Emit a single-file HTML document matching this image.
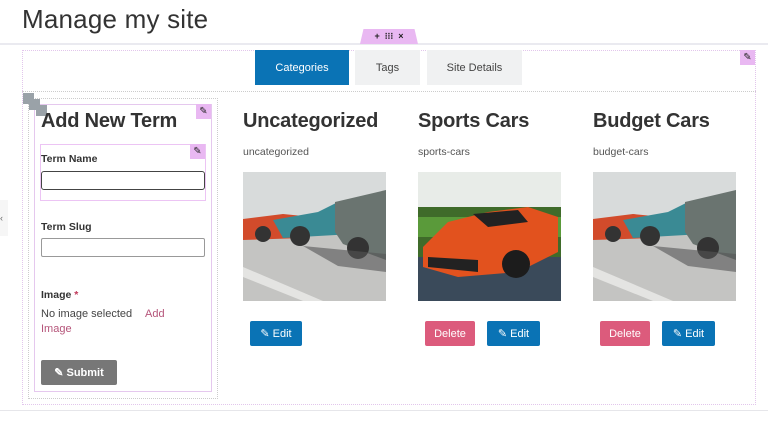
<!DOCTYPE html>
<html><head><style>
*{box-sizing:border-box;margin:0;padding:0}
body{width:768px;height:423px;background:#fff;font-family:"Liberation Sans",sans-serif;color:#333;position:relative;overflow:hidden}
.a{position:absolute}
h1{position:absolute;left:22px;top:4px;font-size:26px;font-weight:normal;color:#333;letter-spacing:.2px}
.btn{position:absolute;color:#fff;font-size:11px;display:flex;align-items:center;justify-content:center;border-radius:2px}
.blue{background:#0a73b5}.red{background:#dc5b7c}
.lbl{position:absolute;font-size:10.5px;color:#333;font-weight:bold}
.h2{position:absolute;font-size:20px;font-weight:bold;color:#333;letter-spacing:-.2px}
.slug{position:absolute;font-size:10.5px;color:#555}
.pen{position:absolute;width:15px;height:15px;background:#e9b8f2;font-size:10px;text-align:center;line-height:15px;color:#222}
</style></head><body>
<h1>Manage my site</h1>
<div class="a" style="left:0;top:43px;width:768px;height:2px;background:#eaeaf0"></div>
<div class="a" style="left:360px;top:29px;width:58px;height:15px;background:#e9b8f2;clip-path:polygon(6% 0,94% 0,100% 100%,0 100%);font-size:9px;text-align:center;line-height:15px;color:#222;font-weight:bold">+ &nbsp;⁝⁝⁝ &nbsp;×</div>
<div class="a" style="left:22px;top:50px;width:734px;height:355px;border:1px dotted #e2c6ec"></div>
<div class="a" style="left:22px;top:91px;width:734px;border-top:1px dotted #ccc"></div>
<div class="pen" style="left:740px;top:50px">✎</div>
<div class="btn blue" style="left:255px;top:50px;width:94px;height:35px;border-radius:0">Categories</div>
<div class="btn" style="left:355px;top:50px;width:65px;height:35px;background:#f0f1f2;color:#444;border-radius:0">Tags</div>
<div class="btn" style="left:427px;top:50px;width:95px;height:35px;background:#f0f1f2;color:#444;border-radius:0">Site Details</div>
<div class="a" style="left:0;top:200px;width:8px;height:36px;background:#f6f6f6;font-size:9px;line-height:36px;color:#666">‹</div>
<div class="a" style="left:28px;top:98px;width:190px;height:301px;border:1px dotted #ccc"></div>
<div class="a" style="left:34px;top:104px;width:178px;height:288px;border:1px solid #e5c8ee"></div>
<div class="a" style="left:23px;top:93px;width:11px;height:11px;background:#9aa2a8"></div>
<div class="a" style="left:29px;top:99px;width:11px;height:11px;background:#9aa2a8"></div>
<div class="a" style="left:36px;top:105px;width:11px;height:11px;background:#9aa2a8"></div>
<div class="h2" style="left:41px;top:110px">Add New Term</div>
<div class="pen" style="left:196px;top:104px">✎</div>
<div class="a" style="left:40px;top:144px;width:166px;height:57px;border:1px solid #ecc4f4"></div>
<div class="pen" style="left:190px;top:144px">✎</div>
<div class="lbl" style="left:41px;top:153px">Term Name</div>
<div class="a" style="left:41px;top:171px;width:164px;height:19px;border:1.5px solid #444;border-radius:3px"></div>
<div class="lbl" style="left:41px;top:221px">Term Slug</div>
<div class="a" style="left:41px;top:238px;width:164px;height:19px;border:1px solid #999;border-radius:2px"></div>
<div class="lbl" style="left:41px;top:289px">Image <span style="color:#c0395a">*</span></div>
<div class="a" style="left:41px;top:308px;font-size:11px;color:#444">No image selected</div>
<div class="a" style="left:145px;top:308px;font-size:11px;color:#b5557a">Add</div>
<div class="a" style="left:41px;top:323px;font-size:11px;color:#b5557a">Image</div>
<div class="btn" style="left:41px;top:360px;width:76px;height:25px;background:#777;font-weight:bold">✎ Submit</div>

<svg width="0" height="0" style="position:absolute"><defs>
<g id="cars">
<rect width="143" height="129" fill="#d8dbdb"/>
<rect y="62" width="143" height="67" fill="#c4c4c2"/>
<path d="M0 95 L80 129 L60 129 L0 105Z" fill="#e4e4e2"/>
<path d="M0 47 L40 42 L60 44 L60 66 L0 68Z" fill="#d24b2b"/>
<path d="M30 48 L75 40 L95 30 L120 28 L110 62 L40 66Z" fill="#3a8a94"/>
<path d="M92 30 L143 18 L143 88 L100 72 L92 60Z" fill="#6a7470"/>
<circle cx="20" cy="62" r="8" fill="#333"/><circle cx="57" cy="64" r="10" fill="#333"/><circle cx="115" cy="76" r="11" fill="#333"/>
<path d="M60 74 L143 82 L143 100 L95 94Z" fill="#555" opacity=".6"/>
</g>
<g id="vette">
<rect width="143" height="129" fill="#3f6b2a"/>
<rect width="143" height="35" fill="#e8ece8"/>
<rect y="45" width="143" height="20" fill="#5a9a3a"/>
<rect y="85" width="143" height="44" fill="#3a4a5a"/>
<path d="M5 75 L30 50 L70 40 L110 35 L140 45 L140 80 L100 100 L40 105 L5 95Z" fill="#e2521e"/>
<path d="M55 42 L100 38 L110 50 L70 55Z" fill="#222"/>
<path d="M10 85 L60 88 L60 100 L10 95Z" fill="#222"/>
<circle cx="98" cy="92" r="14" fill="#1c1c1c"/>
</g></defs></svg>

<div class="h2" style="left:243px;top:110px">Uncategorized</div>
<div class="slug" style="left:243px;top:146px">uncategorized</div>
<svg class="a" style="left:243px;top:172px" width="143" height="129"><use href="#cars"/></svg>
<div class="btn blue" style="left:250px;top:321px;width:52px;height:25px">✎ Edit</div>

<div class="h2" style="left:418px;top:110px">Sports Cars</div>
<div class="slug" style="left:418px;top:146px">sports-cars</div>
<svg class="a" style="left:418px;top:172px" width="143" height="129"><use href="#vette"/></svg>
<div class="btn red" style="left:425px;top:321px;width:50px;height:25px">Delete</div>
<div class="btn blue" style="left:487px;top:321px;width:53px;height:25px">✎ Edit</div>

<div class="h2" style="left:593px;top:110px">Budget Cars</div>
<div class="slug" style="left:593px;top:146px">budget-cars</div>
<svg class="a" style="left:593px;top:172px" width="143" height="129"><use href="#cars"/></svg>
<div class="btn red" style="left:600px;top:321px;width:50px;height:25px">Delete</div>
<div class="btn blue" style="left:662px;top:321px;width:53px;height:25px">✎ Edit</div>

<div class="a" style="left:0;top:410px;width:768px;height:1px;background:#e6e6ea"></div>
</body></html>
